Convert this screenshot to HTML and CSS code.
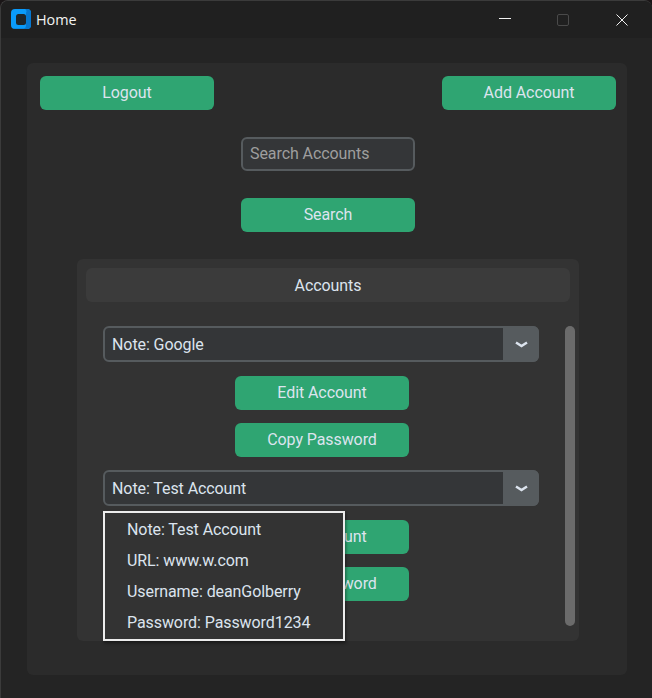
FILE: index.html
```html
<!DOCTYPE html>
<html lang="en">
<head>
<meta charset="utf-8">
<title>Home</title>
<link rel="stylesheet" href="styles.css">
</head>
<body>
<div class="window">
  <header class="titlebar">
    <div class="title-left">
      <svg class="logo" width="20" height="20" viewBox="0 0 20 20"><rect width="20" height="20" rx="4" fill="#0a9bfb"/><path d="M14 0h2a4 4 0 0 1 4 4v12a4 4 0 0 1-4 4H4a4 4 0 0 1-2-.6h11a3 3 0 0 0 2-3V4a3 3 0 0 0-1-4z" fill="#0677d0"/><rect x="5" y="5" width="10" height="11" rx="2.5" fill="#1e262c"/></svg>
      <span class="title-text">Home</span>
    </div>
    <div class="controls">
      <svg class="ctl ctl-min" width="12" height="12" viewBox="0 0 12 12"><path d="M0 5.500h12" stroke="#f2f2f2" stroke-width="1"/></svg>
      <svg class="ctl ctl-max" width="12" height="12" viewBox="0 0 12 12"><rect x=".5" y=".5" width="11" height="11" rx="1.500" fill="none" stroke="#4a4a4a"/></svg>
      <svg class="ctl ctl-close" width="12" height="12" viewBox="0 0 12 12"><path d="M.5.5l11 11M11.500.5l-11 11" stroke="#f2f2f2" stroke-width="1"/></svg>
    </div>
  </header>
  <main class="content">
    <section class="card">
      <div class="top-row">
        <button class="btn">Logout</button>
        <button class="btn">Add Account</button>
      </div>
      <input class="search" type="text" placeholder="Search Accounts">
      <button class="btn search-btn">Search</button>
      <section class="panel">
        <div class="panel-label">Accounts</div>
        <div class="panel-body">
          <div class="list">
            <div class="dropdown">
              <span class="dropdown-text">Note: Google</span>
              <span class="dropdown-arrow"><svg width="13" height="7" viewBox="0 0 13 7"><path d="M1 1.500l5.500 3.500 5.500-3.500" fill="none" stroke="#dce4ee" stroke-width="2.500"/></svg></span>
            </div>
            <button class="btn item-btn">Edit Account</button>
            <button class="btn item-btn">Copy Password</button>
            <div class="dropdown open">
              <span class="dropdown-text">Note: Test Account</span>
              <span class="dropdown-arrow"><svg width="13" height="7" viewBox="0 0 13 7"><path d="M1 1.500l5.500 3.500 5.500-3.500" fill="none" stroke="#dce4ee" stroke-width="2.500"/></svg></span>
              <div class="menu">
                <div class="menu-item">Note: Test Account</div>
                <div class="menu-item">URL: www.w.com</div>
                <div class="menu-item">Username: deanGolberry</div>
                <div class="menu-item">Password: Password1234</div>
              </div>
            </div>
            <button class="btn item-btn">Edit Account</button>
            <button class="btn item-btn">Copy Password</button>
          </div>
          <div class="scrollbar"></div>
        </div>
      </section>
    </section>
  </main>
</div>
</body>
</html>
```
FILE: styles.css
```css
* { box-sizing: border-box; }
html, body { margin: 0; padding: 0; }
body {
  width: 652px;
  height: 698px;
  background: #1a1617;
  overflow: hidden;
  font-family: Roboto, "Liberation Sans", sans-serif;
  font-size: 16px;
  letter-spacing: -0.08px;
  color: #dce4ee;
}
.window {
  width: 652px;
  height: 698px;
  display: flex;
  flex-direction: column;
  background: #242424;
  border: 1px solid #3b3b3b;
  border-bottom: 0;
  border-right: 0;
  border-radius: 8px 8px 0 0;
  overflow: hidden;
}
.titlebar {
  height: 37px;
  flex: none;
  display: flex;
  align-items: center;
  justify-content: space-between;
  background: #202020;
}
.title-left { display: flex; align-items: center; padding-left: 10px; }
.logo { display: block; margin-top: -1px; }
.title-text {
  margin-left: 5px;
  font-family: "Open Sans", sans-serif;
  font-size: 14.4px;
  letter-spacing: 0;
  color: #f2f2f2;
}
.controls { display: flex; align-items: center; padding-right: 24px; }
.ctl { display: block; }
.ctl-max { margin-left: 46px; }
.ctl-close { margin-left: 47px; }
.ctl-min { margin-top: -1px; }
.content {
  flex: 1;
  padding: 25px 25px 23px 26px;
}
.card {
  height: 612px;
  background: #2b2b2b;
  border-radius: 6px;
  padding: 13px 11px 0 13px;
  display: flex;
  flex-direction: column;
}
.top-row { display: flex; justify-content: space-between; }
.btn {
  width: 174px;
  height: 34px;
  flex: none;
  padding: 0 0 2px;
  border: 0;
  border-radius: 6px;
  background: #2fa572;
  color: #dce4ee;
  font-family: inherit;
  font-size: 16px;
  letter-spacing: inherit;
}
.search {
  width: 174px;
  height: 34px;
  margin: 27px 0 0 201px;
  padding: 0 7px 2px;
  border: 2px solid #565b5e;
  border-radius: 6px;
  background: #343638;
  color: #dce4ee;
  font-family: inherit;
  font-size: 16px;
  letter-spacing: inherit;
  outline: none;
}
.search::placeholder { color: #9e9e9e; opacity: 1; }
.search-btn { margin: 27px 0 0 201px; }
.panel {
  width: 502px;
  height: 382px;
  margin: 27px 0 0 37px;
  padding: 9px;
  background: #333333;
  border-radius: 6px;
}
.panel-label {
  height: 34px;
  display: flex;
  align-items: center;
  justify-content: center;
  background: #3b3b3b;
  border-radius: 6px;
}
.panel-body {
  display: flex;
  justify-content: space-between;
  margin-top: 24px;
  padding-left: 17px;
}
.list {
  width: 436px;
  display: flex;
  flex-direction: column;
  align-items: flex-start;
}
.dropdown {
  position: relative;
  width: 436px;
  height: 36px;
  flex: none;
  display: flex;
  border: 2px solid #565b5e;
  border-radius: 6px;
  background: #343638;
}
.dropdown-text { flex: 1; padding-left: 7px; line-height: 34px; }
.dropdown-arrow {
  width: 36px;
  margin: -2px -2px -2px 0;
  padding: 1px 0 0 1px;
  display: flex;
  align-items: center;
  justify-content: center;
  background: #565b5e;
  border-radius: 0 6px 6px 0;
}
.item-btn { margin: 14px 0 0 132px; }
.item-btn + .item-btn { margin-top: 13px; }
.item-btn + .dropdown { margin-top: 13px; }
.menu {
  position: absolute;
  left: -2px;
  top: 39px;
  width: 242px;
  height: 130px;
  padding: 1px 0 3px;
  background: #333333;
  border: 2px solid #ececec;
  box-shadow: 1px 2px 3px rgba(0, 0, 0, 0.45);
  z-index: 2;
}
.menu-item { height: 31px; line-height: 31px; padding-left: 22px; white-space: nowrap; }
.scrollbar {
  width: 10px;
  height: 300px;
  margin-right: -5px;
  background: #6b6b6b;
  border-radius: 5px;
}
```
